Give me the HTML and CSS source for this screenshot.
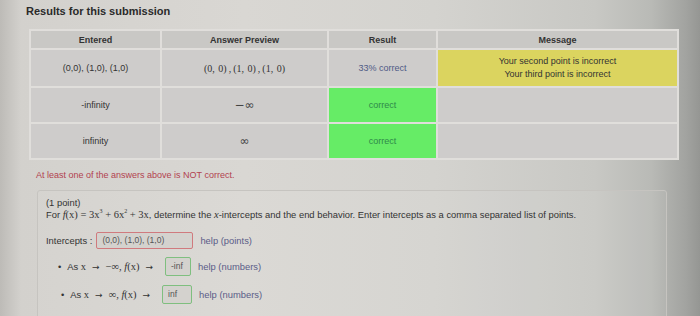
FILE: index.html
```html
<!DOCTYPE html>
<html lang="en">
<head>
    <meta charset="UTF-8">
    <title>Results for this submission</title>
    <link rel="stylesheet" href="styles.css">
</head>
<body>
    <div class="page">
        <h3 class="title">Results for this submission</h3>
        <table class="results">
            <tr>
                <th class="c1">Entered</th>
                <th class="c2">Answer Preview</th>
                <th class="c3">Result</th>
                <th class="c4">Message</th>
            </tr>
            <tr class="r1">
                <td>(0,0), (1,0), (1,0)</td>
                <td class="math">(0, 0)&thinsp;,&thinsp;(1, 0)&thinsp;,&thinsp;(1, 0)</td>
                <td class="partial">33% correct</td>
                <td class="warn">Your second point is incorrect<br>Your third point is incorrect</td>
            </tr>
            <tr class="r2">
                <td>-infinity</td>
                <td class="sym">&minus;&infin;</td>
                <td class="ok">correct</td>
                <td></td>
            </tr>
            <tr class="r3">
                <td>infinity</td>
                <td class="sym">&infin;</td>
                <td class="ok">correct</td>
                <td></td>
            </tr>
        </table>
        <p class="notice">At least one of the answers above is NOT correct.</p>
        <div class="problem">
            <p class="points">(1 point)</p>
            <p class="question">For <span class="m"><i>f</i>(x) = 3x<sup>3</sup> + 6x<sup>2</sup> + 3x</span>, determine the <span class="m"><i>x</i></span>-intercepts and the end behavior. Enter intercepts as a comma separated list of points.</p>
            <div class="line intercepts">
                <span class="label">Intercepts :</span>
                <span class="field bad wide">(0,0), (1,0), (1,0)</span>
                <span class="help">help (points)</span>
            </div>
            <ul class="ends">
                <li class="line first">
                    <span>As <span class="m">x</span></span>
                    <span class="arrow">&rarr;</span>
                    <span class="m">&minus;&infin;, <i>f</i>(x)</span>
                    <span class="arrow">&rarr;</span>
                    <span class="field good neg">-inf</span>
                    <span class="help">help (numbers)</span>
                </li>
                <li class="line second">
                    <span>As <span class="m">x</span></span>
                    <span class="arrow">&rarr;</span>
                    <span class="m">&infin;, <i>f</i>(x)</span>
                    <span class="arrow">&rarr;</span>
                    <span class="field good pos">inf</span>
                    <span class="help">help (numbers)</span>
                </li>
            </ul>
        </div>
    </div>
</body>
</html>
```

FILE: styles.css
```css
*
{
    box-sizing: border-box;
}
html, body
{
    margin: 0;
    height: 100%;
}
body
{
    font-family: "Liberation Sans", Arial, sans-serif;
    color: #333;
    background: linear-gradient(90deg, #bdbbb7 0%, #d3d1cd 3%, #d9d7d3 35%, #d4d3cf 62%, #c8c8c4 85%, #b9bab6 93%, #a2a3a0 98%, #959693 100%);
    overflow: hidden;
}
.page
{
    padding: 4px 0 0 26px;
}
.title
{
    font-size: 11px;
    font-weight: bold;
    color: #2a2a2a;
    margin: 0 0 11px 0;
    line-height: 14px;
}
.results
{
    margin-left: 3px;
    width: 648px;
    border-collapse: collapse;
    table-layout: fixed;
    font-size: 9px;
    background: #cecccb;
}
.results th, .results td
{
    border: 2px solid #e0dedb;
    text-align: center;
    padding: 0;
}
.results th
{
    height: 19px;
    font-size: 9px;
    font-weight: bold;
    color: #333;
    background: #c9c8c5;
}
.c1 { width: 131px; }
.c2 { width: 167px; }
.c3 { width: 109px; }
.c4 { width: 241px; }
.r1 td { height: 38px; }
.r2 td, .r3 td { height: 36px; }
.math
{
    font-family: "Liberation Serif", "Times New Roman", serif;
    font-size: 10px;
    word-spacing: 1px;
}
.sym
{
    font-family: "DejaVu Sans", sans-serif;
    font-size: 12px;
    color: #444;
}
.partial
{
    color: #4f5a86;
}
.warn
{
    background: #dbd45f;
    color: #333;
    line-height: 13px;
}
.ok
{
    background: #66ec66;
    color: #2f8a4a;
}
.notice
{
    margin: 10px 0 0 10px;
    font-size: 9px;
    color: #b2424f;
    line-height: 11px;
}
.problem
{
    margin: 9px 0 0 11px;
    width: 630px;
    height: 140px;
    padding: 6px 0 0 8px;
    border: 1px solid #c6c4c0;
    border-radius: 3px;
    background: rgba(255, 255, 255, 0.06);
    font-size: 9.4px;
    color: #333;
}
.points, .question
{
    margin: 0;
    line-height: 12px;
}
.m
{
    font-family: "Liberation Serif", "Times New Roman", serif;
    font-size: 10.5px;
}
.m sup
{
    font-size: 6px;
    vertical-align: 5px;
    line-height: 0;
}
.line
{
    display: flex;
    align-items: center;
    gap: 4px;
}
.intercepts
{
    margin: 11px 0 0 0;
}
.field
{
    display: inline-block;
    height: 17px;
    line-height: 15px;
    padding: 0 5px;
    background: #d4d2ce;
    border-radius: 2px;
    font-size: 8.5px;
    color: #555;
}
.bad
{
    border: 1px solid #d07a7e;
}
.good
{
    border: 1px solid #7fbf7f;
}
.wide
{
    width: 97px;
}
.help
{
    margin-left: 3px;
    color: #5a5c88;
}
.ends
{
    margin: 0;
    padding: 0 0 0 12px;
    list-style: none;
}
.ends li::before
{
    content: "\2022";
    margin-right: 2px;
    color: #333;
}
.ends .first
{
    margin-top: 8px;
}
.ends .second
{
    margin-top: 9px;
    padding-left: 3px;
}
.arrow
{
    font-family: "DejaVu Sans", sans-serif;
    font-size: 9px;
    margin: 0 2px;
}
.ends .field
{
    height: 19px;
    line-height: 17px;
    margin-left: 6px;
}
.neg
{
    width: 26px;
}
.pos
{
    width: 30px;
}
```
